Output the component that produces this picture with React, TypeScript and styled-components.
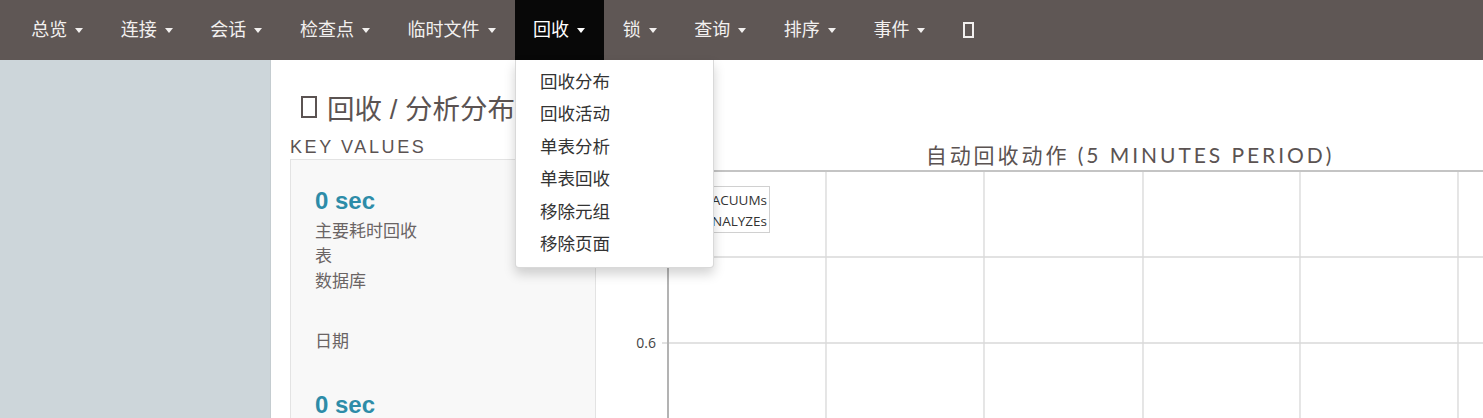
import React from "react";
import styled, { createGlobalStyle } from "styled-components";

const GlobalStyle = createGlobalStyle`
    html, body {
        margin: 0;
        padding: 0;
        overflow: hidden;
        background: #fff;
    }
    body {
        font-family: "Liberation Sans", "Noto Sans CJK SC", sans-serif;
    }
`;

const Navbar = styled.nav`
    display: flex;
    height: 60px;
    padding-left: 13px;
    background: #5f5755;
`;

const NavItem = styled.div<{ $active?: boolean }>`
    position: relative;
    display: flex;
    align-items: center;
    padding: 0 19.4px 0 18.2px;
    height: 60px;
    color: ${(p) => (p.$active ? "#fff" : "#f2f0ef")};
    background: ${(p) => (p.$active ? "#080808" : "transparent")};
    font-size: 18px;
    line-height: 1;
`;

const Caret = styled.span`
    display: inline-block;
    width: 0;
    height: 0;
    margin-left: 8px;
    margin-top: 1px;
    border-top: 5px solid currentColor;
    border-left: 4.5px solid transparent;
    border-right: 4.5px solid transparent;
`;

const Tofu = styled.span<{ $w: number; $h: number }>`
    display: inline-block;
    box-sizing: border-box;
    width: ${(p) => p.$w}px;
    height: ${(p) => p.$h}px;
    border: 2px solid currentColor;
`;

const Dropdown = styled.ul`
    position: absolute;
    top: 100%;
    left: 0;
    z-index: 10;
    box-sizing: border-box;
    width: 199px;
    margin: 0;
    padding: 6px 0 7px;
    list-style: none;
    background: #fff;
    border: 1px solid rgba(0, 0, 0, 0.15);
    border-top: none;
    border-radius: 0 0 4px 4px;
    box-shadow: 0 6px 12px rgba(0, 0, 0, 0.175);
`;

const DropdownItem = styled.li`
    height: 32.4px;
    line-height: 32.4px;
    padding: 0 24px;
    color: #333;
    font-size: 17.5px;
`;

const Layout = styled.div`
    display: flex;
    height: 358px;
`;

const Sidebar = styled.aside`
    flex: 0 0 270px;
    background: #cdd6da;
    border-right: 1px solid #c4ccd0;
`;

const Main = styled.main`
    flex: 0 0 auto;
    padding: 28px 0 0 19px;
`;

const PageTitle = styled.h1`
    display: flex;
    align-items: center;
    gap: 10px;
    margin: 0 0 12px 11px;
    height: 37px;
    color: #5b5352;
    font-size: 27.5px;
    font-weight: 400;
`;

const Row = styled.div`
    display: flex;
    align-items: flex-start;
`;

const KeyColumn = styled.section`
    flex: 0 0 306px;
`;

const SectionLabel = styled.h2`
    margin: 0 0 2px;
    height: 20px;
    line-height: 20px;
    color: #5b5352;
    font-size: 18px;
    font-weight: 400;
    letter-spacing: 2.6px;
`;

const Panel = styled.div`
    box-sizing: border-box;
    padding: 27px 24px 0;
    height: 260px;
    background: #f8f8f8;
    border: 1px solid #e3e3e3;
`;

const Value = styled.div<{ $gap?: number }>`
    margin-top: ${(p) => p.$gap ?? 0}px;
    height: 28px;
    line-height: 28px;
    color: #2d8ca8;
    font-size: 24px;
    font-weight: 700;
`;

const Line = styled.div<{ $gap?: number }>`
    margin-top: ${(p) => p.$gap ?? 0}px;
    height: 25px;
    line-height: 25px;
    color: #6a6464;
    font-size: 17px;
`;

const ChartColumn = styled.section`
    flex: 0 0 1068px;
    padding-top: 4px;
`;

const ChartTitle = styled.h2`
    margin: 0;
    height: 29px;
    line-height: 27px;
    text-align: center;
    color: #5b5352;
    font-family: "Lato", "Noto Sans CJK SC", sans-serif;
    font-size: 21px;
    font-weight: 400;
    letter-spacing: 2.95px;
`;

const Plot = styled.svg`
    display: block;
    font-family: "Open Sans", sans-serif;
`;

const menus = [
    { label: "总览" },
    { label: "连接" },
    { label: "会话" },
    { label: "检查点" },
    { label: "临时文件" },
    { label: "回收", active: true },
    { label: "锁" },
    { label: "查询" },
    { label: "排序" },
    { label: "事件" },
];

const vacuumItems = ["回收分布", "回收活动", "单表分析", "单表回收", "移除元组", "移除页面"];

const vLines = [230, 388, 547, 704, 862, 1020];
const hLines = [87, 173, 259];

const Chart = () => (
    <Plot width={1068} height={250}>
        {vLines.map((x) => (
            <line key={x} x1={x} y1={0} x2={x} y2={250} stroke="#d8d8d8" strokeWidth={1.3} />
        ))}
        {hLines.map((y) => (
            <line key={y} x1={66} y1={y} x2={1068} y2={y} stroke="#d8d8d8" strokeWidth={1.3} />
        ))}
        <line x1={72} y1={1} x2={1068} y2={1} stroke="#c4c4c4" strokeWidth={2} />
        <line x1={72} y1={0} x2={72} y2={250} stroke="#b3b3b3" strokeWidth={2} />
        <text x={60} y={178} textAnchor="end" fontSize={14} fill="#444">
            0.6
        </text>
        <rect x={76.5} y={16.5} width={97} height={46} fill="#fff" stroke="#d0d0d0" />
        <rect x={84} y={25} width={10} height={10} fill="#4e79a7" />
        <rect x={84} y={46} width={10} height={10} fill="#f28e2b" />
        <text x={171} y={35} textAnchor="end" fontSize={13.5} fill="#333">
            VACUUMs
        </text>
        <text x={171} y={56} textAnchor="end" fontSize={13.5} fill="#333">
            ANALYZEs
        </text>
    </Plot>
);

export default function App() {
    return (
        <>
            <GlobalStyle />
            <Navbar>
                {menus.map((m) => (
                    <NavItem key={m.label} $active={m.active}>
                        {m.label}
                        <Caret />
                        {m.active && (
                            <Dropdown>
                                {vacuumItems.map((item) => (
                                    <DropdownItem key={item}>{item}</DropdownItem>
                                ))}
                            </Dropdown>
                        )}
                    </NavItem>
                ))}
                <NavItem>
                    <Tofu $w={11} $h={16} />
                </NavItem>
            </Navbar>
            <Layout>
                <Sidebar />
                <Main>
                    <PageTitle>
                        <Tofu $w={16} $h={22} />
                        回收 / 分析分布
                    </PageTitle>
                    <Row>
                        <KeyColumn>
                            <SectionLabel>KEY VALUES</SectionLabel>
                            <Panel>
                                <Value>0 sec</Value>
                                <Line $gap={4}>主要耗时回收</Line>
                                <Line>表</Line>
                                <Line>数据库</Line>
                                <Line $gap={35}>日期</Line>
                                <Value $gap={37}>0 sec</Value>
                            </Panel>
                        </KeyColumn>
                        <ChartColumn>
                            <ChartTitle>自动回收动作 (5 MINUTES PERIOD)</ChartTitle>
                            <Chart />
                        </ChartColumn>
                    </Row>
                </Main>
            </Layout>
        </>
    );
}
